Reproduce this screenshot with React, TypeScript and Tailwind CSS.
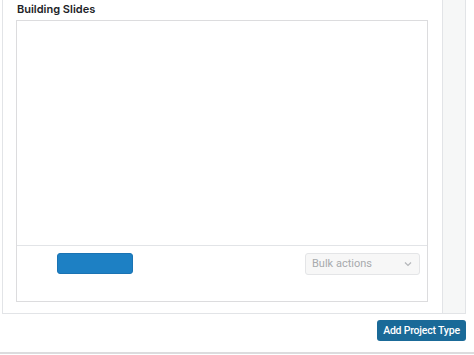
import React from "react";

export default function App() {
  return (
    <div className="w-[474px] h-[355px] bg-white overflow-hidden flex flex-col" style={{ fontFamily: "Inter, 'Liberation Sans', sans-serif" }}>
      <div className="ml-[2px] w-[464px] h-[314px] flex border-l border-b border-[#e2e4e7] bg-white">
        <div className="w-[440px] flex flex-col pl-[13px]">
          <div className="h-[20px] pt-[2px] text-[11px] font-semibold leading-[14px] text-[#1d2327] pl-[1px]">Building Slides</div>
          <div className="w-[412px] h-[282px] border border-[#dcdcde] flex flex-col bg-white">
            <div className="h-[225px] border-b border-[#e2e4e7]"></div>
            <div className="flex justify-between items-start pt-[7px] pl-[40px] pr-[7px]">
              <div className="w-[76px] h-[21px] rounded-[3px] bg-[#1d80c4] border border-[#1a73b3]"></div>
              <div className="w-[115px] h-[22px] rounded-[3px] border border-[#e4e5e7] bg-[#f7f7f7] flex items-center justify-between pl-[6px] pr-[6px]">
                <span className="text-[11px] text-[#a7aaad] whitespace-nowrap" style={{ fontFamily: "Roboto, 'Liberation Sans', sans-serif" }}>Bulk actions</span>
                <svg width="10" height="10" viewBox="0 0 10 10" fill="none" stroke="#b4b6b9" strokeWidth="1.2"><path d="M2 3.5 L5 6.5 L8 3.5" /></svg>
              </div>
            </div>
          </div>
        </div>
        <div className="w-[24px] bg-[#f6f7f7] border-l border-r border-[#e2e4e7]"></div>
      </div>
      <div className="flex justify-end pr-[8px] pt-[6px]">
        <div className="w-[89px] h-[21px] rounded-[3px] bg-[#1a6a98] flex items-center justify-center text-white text-[10.5px] font-medium whitespace-nowrap tracking-[-0.2px]" style={{ fontFamily: "Roboto, 'Liberation Sans', sans-serif" }}>Add Project Type</div>
      </div>
      <div className="mt-[11px] h-[2px] bg-[#dcdcde] w-full"></div>
    </div>
  );
}
